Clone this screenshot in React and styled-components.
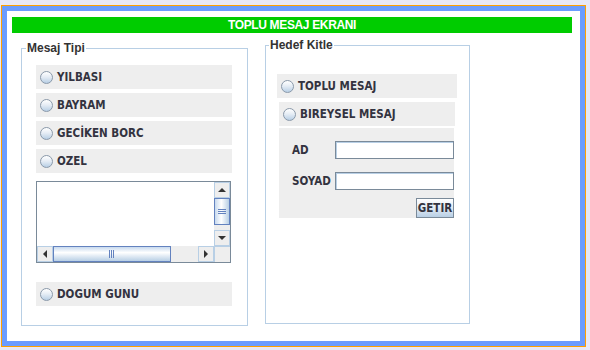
import styled, { createGlobalStyle } from "styled-components"

const GlobalStyle = createGlobalStyle`
  html, body {
    margin: 0;
    padding: 0;
    background: #e8e8f6;
  }
  body {
    font-family: "Liberation Sans", Arial, sans-serif;
  }
  #root {
    padding: 5px 0 0 1px;
  }
`

const labelFont = `
  font-family: "DejaVu Sans Condensed", "DejaVu Sans", sans-serif;
  font-stretch: condensed;
  font-size: 11.5px;
  font-weight: bold;
  color: #333340;
`

const Frame = styled.div`
  width: 585px;
  height: 342px;
  box-sizing: border-box;
  border: 1px solid #ffa000;
`

const Window = styled.div`
  height: 100%;
  box-sizing: border-box;
  border: 5px solid #6b9cff;
  background: #ffffff;
  padding: 6px 0 0 5px;
`

const TitleBar = styled.div`
  width: 560px;
  height: 16px;
  background: #00cc00;
  color: #ffffff;
  font-weight: bold;
  font-size: 12px;
  letter-spacing: -0.35px;
  line-height: 16px;
  text-align: center;
`

const Columns = styled.div`
  display: flex;
  align-items: flex-start;
  gap: 17px;
  padding-left: 9px;
`

const Group = styled.fieldset`
  box-sizing: border-box;
  margin: ${(p) => p.$top}px 0 0 0;
  width: ${(p) => p.$width}px;
  height: ${(p) => p.$height}px;
  border: 1px solid #b8cfe5;
  padding: ${(p) => p.$pad};
  min-width: 0;
`

const Legend = styled.legend`
  font-size: 12px;
  font-weight: bold;
  color: #333333;
  line-height: 14px;
  padding: 0 1px;
  margin-left: ${(p) => p.$offset}px;
`

const OptionList = styled.div`
  display: flex;
  flex-direction: column;
  gap: 4px;
`

const Option = styled.label`
  display: flex;
  align-items: center;
  gap: 4px;
  box-sizing: border-box;
  width: ${(p) => p.$width || 196}px;
  height: 24px;
  margin: ${(p) => p.$margin || "0"};
  padding-left: 4px;
  background: #eeeeee;
  ${labelFont}
`

const Radio = styled.span`
  width: 11px;
  height: 11px;
  border-radius: 50%;
  border: 1px solid #8a99aa;
  background: linear-gradient(180deg, #ffffff 0%, #e6edf5 45%, #b8cfe5 100%);
  flex: none;
`

const ScrollPane = styled.div`
  display: grid;
  grid-template-columns: 1fr 16px;
  grid-template-rows: 1fr 16px;
  box-sizing: border-box;
  width: 195px;
  height: 82px;
  margin-top: 8px;
  border: 1px solid #7a8a99;
  background: #eeeeee;
`

const Viewport = styled.div`
  background: #ffffff;
`

const VBar = styled.div`
  display: flex;
  flex-direction: column;
  background: #eeeeee;
`

const HBar = styled.div`
  display: flex;
  background: #eeeeee;
`

const ArrowButton = styled.div`
  flex: none;
  width: 16px;
  height: 16px;
  box-sizing: border-box;
  display: flex;
  align-items: center;
  justify-content: center;
  background: #eeeeee;
  border: 1px solid #b8cfe5;
`

const Corner = styled.div`
  background: #eeeeee;
  border-top: 1px solid #b8cfe5;
  border-left: 1px solid #b8cfe5;
`

const Thumb = styled.div`
  box-sizing: border-box;
  flex: none;
  display: flex;
  align-items: center;
  justify-content: center;
  border: 1px solid #6382bf;
  ${(p) =>
    p.$vertical
      ? `width: 16px; height: 27px;
         background: linear-gradient(90deg, #c8daee 0%, #ffffff 45%, #b8cfe5 100%);`
      : `width: 118px; height: 16px;
         background: linear-gradient(180deg, #c8daee 0%, #ffffff 40%, #b8cfe5 100%);`}
`

const Track = styled.div`
  flex: 1;
`

const Spacer = styled.div`
  height: 19px;
`

const FormPanel = styled.div`
  box-sizing: border-box;
  width: 175px;
  height: 90px;
  margin: 2px 0 0 2px;
  padding: 13px 0 0 13px;
  background: #eeeeee;
  display: grid;
  grid-template-columns: 43px 119px;
  grid-template-rows: 18px 18px;
  row-gap: 13px;
  align-items: center;
`

const FieldLabel = styled.span`
  ${labelFont}
`

const TextField = styled.input`
  box-sizing: border-box;
  width: 119px;
  height: 18px;
  margin: 0;
  border: 1px solid #7a8a99;
  box-shadow: inset 1px 1px 0 #b8cfe5;
  background: #ffffff;
  outline: none;
`

const Button = styled.button`
  grid-column: 2;
  justify-self: end;
  align-self: start;
  margin-top: -5px;
  box-sizing: border-box;
  width: 38px;
  height: 20px;
  padding: 0;
  border: 1px solid #7a8a99;
  background: linear-gradient(180deg, #ffffff 0%, #e8eff7 40%, #b8cfe5 100%);
  ${labelFont}
`

function Arrow({ dir }) {
  const points = {
    up: "0,5 4,1 8,5",
    down: "0,1 4,5 8,1",
    left: "5,0 1,4 5,8",
    right: "1,0 5,4 1,8",
  }[dir]
  const horizontal = dir === "left" || dir === "right"
  return (
    <svg width={horizontal ? 6 : 9} height={horizontal ? 9 : 6}>
      <polygon points={points} fill="#333333" />
    </svg>
  )
}

function Grip({ vertical }) {
  return vertical ? (
    <svg width="8" height="6">
      <line x1="0" y1="0.5" x2="8" y2="0.5" stroke="#6382bf" />
      <line x1="0" y1="2.5" x2="8" y2="2.5" stroke="#6382bf" />
      <line x1="0" y1="4.5" x2="8" y2="4.5" stroke="#6382bf" />
    </svg>
  ) : (
    <svg width="6" height="8">
      <line x1="0.5" y1="0" x2="0.5" y2="8" stroke="#6382bf" />
      <line x1="2.5" y1="0" x2="2.5" y2="8" stroke="#6382bf" />
      <line x1="4.5" y1="0" x2="4.5" y2="8" stroke="#6382bf" />
    </svg>
  )
}

const messageTypes = ["YILBASI", "BAYRAM", "GECİKEN BORC", "OZEL"]

export default function App() {
  return (
    <>
      <GlobalStyle />
      <Frame>
        <Window>
          <TitleBar>TOPLU MESAJ EKRANI</TitleBar>
          <Columns>
            <Group $top={8} $width={227} $height={285} $pad="10px 14px 0 14px">
              <Legend $offset={-10}>Mesaj Tipi</Legend>
              <OptionList>
                {messageTypes.map((label) => (
                  <Option key={label}>
                    <Radio />
                    {label}
                  </Option>
                ))}
              </OptionList>
              <ScrollPane>
                <Viewport />
                <VBar>
                  <ArrowButton>
                    <Arrow dir="up" />
                  </ArrowButton>
                  <Thumb $vertical>
                    <Grip vertical />
                  </Thumb>
                  <Track />
                  <ArrowButton>
                    <Arrow dir="down" />
                  </ArrowButton>
                </VBar>
                <HBar>
                  <ArrowButton>
                    <Arrow dir="left" />
                  </ArrowButton>
                  <Thumb>
                    <Grip />
                  </Thumb>
                  <Track />
                  <ArrowButton>
                    <Arrow dir="right" />
                  </ArrowButton>
                </HBar>
                <Corner />
              </ScrollPane>
              <Spacer />
              <Option>
                <Radio />
                DOGUM GUNU
              </Option>
            </Group>
            <Group $top={5} $width={205} $height={286} $pad="22px 0 0 11px">
              <Legend $offset={-8}>Hedef Kitle</Legend>
              <Option $width={180}>
                <Radio />
                TOPLU MESAJ
              </Option>
              <Option $width={176} $margin="4px 0 0 2px">
                <Radio />
                BIREYSEL MESAJ
              </Option>
              <FormPanel>
                <FieldLabel>AD</FieldLabel>
                <TextField />
                <FieldLabel>SOYAD</FieldLabel>
                <TextField />
                <Button>GETIR</Button>
              </FormPanel>
            </Group>
          </Columns>
        </Window>
      </Frame>
    </>
  )
}
